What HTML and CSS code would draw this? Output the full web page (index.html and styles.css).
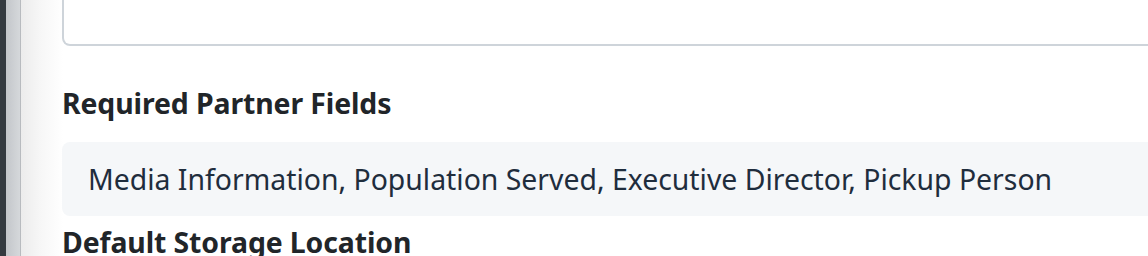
FILE: index.html
```html
<!DOCTYPE html>
<html>
<head>
<meta charset="utf-8">
<link rel="stylesheet" href="styles.css">
</head>
<body>
<div class="layout">
  <div class="sidebar"></div>
  <div class="gutter"></div>
  <main class="main">
    <div class="column">
      <div class="textarea-box"></div>
      <h4 class="field-label">Required Partner Fields</h4>
      <div class="field-value">Media Information, Population Served, Executive Director, Pickup Person</div>
      <h4 class="field-label next">Default Storage Location</h4>
    </div>
  </main>
</div>
</body>
</html>
```

FILE: styles.css
```css
html, body {
  margin: 0;
  padding: 0;
  height: 100%;
  overflow: hidden;
  background: #ffffff;
}

.layout {
  display: flex;
  height: 256px;
  width: 1148px;
  overflow: hidden;
}

.sidebar {
  flex: 0 0 6px;
  background: #343a40;
}

.gutter {
  flex: 0 0 14px;
  background: linear-gradient(to right, #c3c6ca, #d5d8db);
  border-right: 1px solid #b8bbbf;
}

.main {
  flex: 1 1 auto;
  min-width: 0;
  background: linear-gradient(to right, #ececec 0px, #f7f7f7 20px, #ffffff 42px);
  padding-left: 41px;
  overflow: hidden;
}

.column {
  width: 1200px;
  display: flex;
  flex-direction: column;
  font-family: "Noto Sans", "Open Sans", sans-serif;
}

.textarea-box {
  height: 44px;
  border: 2px solid #ced4da;
  border-top: 0;
  border-radius: 0 0 8px 8px;
  background: #ffffff;
}

.field-label {
  margin: 0;
  font-size: 28.4px;
  font-weight: 700;
  color: #212529;
  line-height: 38px;
  margin-top: 38px;
  letter-spacing: -0.1px;
}

.field-label.next {
  margin-top: 7px;
}

.field-value {
  margin-top: 20px;
  height: 74px;
  box-sizing: border-box;
  padding: 0 26px;
  display: flex;
  align-items: center;
  background: #f5f7f9;
  border-radius: 8px;
  font-size: 28.4px;
  color: #1f2d3d;
}
```
